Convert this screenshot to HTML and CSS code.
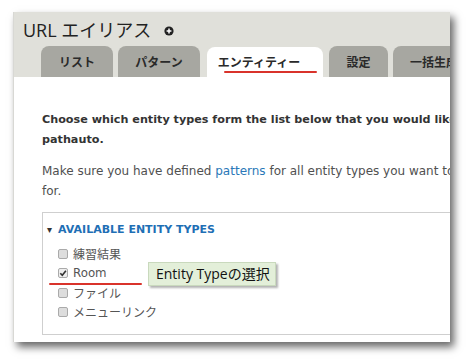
FILE: index.html
```html
<!DOCTYPE html>
<html lang="ja">
<head>
<meta charset="utf-8">
<title>URL エイリアス</title>
<link rel="stylesheet" href="styles.css">
</head>
<body>
<div class="shot">
  <div class="card">
    <header class="head">
      <h1 class="title">URL エイリアス
        <svg class="add" viewBox="0 0 10 10" width="10" height="10"><circle cx="5" cy="5" r="4.6" fill="#222"/><path d="M5 2.6v4.8M2.6 5h4.8" stroke="#fff" stroke-width="1.5"/></svg>
      </h1>
      <nav class="tabs">
        <span class="tab t1">リスト</span>
        <span class="tab t2">パターン</span>
        <span class="tab t3 active">エンティティー</span>
        <span class="tab t4">設定</span>
        <span class="tab t5">一括生成</span>
      </nav>
    </header>
    <main class="content">
      <p class="lead">Choose which entity types form the list below that you would like to use with<br>pathauto.</p>
      <p class="note">Make sure you have defined <a href="#">patterns</a> for all entity types you want to use with<br>for.</p>
      <fieldset class="types">
        <div class="legend"><span class="caret">▾</span>AVAILABLE ENTITY TYPES</div>
        <ul class="checks">
          <li><span class="box"></span>練習結果</li>
          <li><span class="box checked"><svg viewBox="0 0 10 10" width="10" height="10"><path d="M2.3 5.2l2 2.1 3.6-4.6" fill="none" stroke="#333" stroke-width="1.6"/></svg></span>Room</li>
          <li><span class="box"></span>ファイル</li>
          <li><span class="box"></span>メニューリンク</li>
        </ul>
      </fieldset>
    </main>
  </div>
  <span class="redline tab-line"></span>
  <span class="redline room-line"></span>
  <div class="callout">Entity Typeの選択</div>
</div>
</body>
</html>
```
FILE: styles.css
```css
* { box-sizing: border-box; }
html, body { margin: 0; background: #fff; }
.shot {
  position: relative;
  width: 474px;
  height: 363px;
  padding: 12px 0 0 13px;
}
.card {
  width: 437px;
  height: 330px;
  overflow: hidden;
  background: #fff;
  border-left: 1px solid #d8d8d4;
  box-shadow: 4px 5px 8px rgba(0, 0, 0, 0.6);
  display: flex;
  flex-direction: column;
}
.head {
  background: #e0e0da;
  height: 65px;
  display: flex;
  flex-direction: column;
}
.title {
  margin: 0;
  height: 34px;
  padding: 1px 0 0 9px;
  font: normal 18px/28px "Open Sans", "Noto Sans CJK JP", sans-serif;
  color: #222;
  display: flex;
  align-items: center;
  gap: 13px;
  white-space: nowrap;
}
.add { margin-top: 2px; }
.tabs {
  display: flex;
  gap: 5px;
  padding-left: 27px;
  height: 31px;
  align-items: flex-end;
  white-space: nowrap;
}
.tab {
  height: 31px;
  background: #a7a7a1;
  border-radius: 8px 8px 0 0;
  display: flex;
  align-items: center;
  justify-content: center;
  font: bold 12px/1 "Noto Sans CJK JP", sans-serif;
  color: #2a2a2a;
  flex: none;
}
.t1 { width: 72px; }
.t2 { width: 82px; }
.t3 { width: 116px; margin-left: 2px; }
.t4 { width: 59px; margin-left: 1px; }
.t5 { width: 80px; justify-content: flex-start; padding-left: 17px; }
.tab.active { background: #fff; height: 30px; padding-right: 12px; }
.content {
  flex: 1;
  width: 560px;
  padding: 33px 0 0 28px;
  font-family: "DejaVu Sans", "Noto Sans CJK JP", sans-serif;
  font-size: 12px;
  line-height: 20px;
  color: #505050;
}
.content p { margin: 0 0 11px; white-space: nowrap; }
.lead { font-weight: bold; color: #333; font-size: 11.2px; }
.note a { color: #2a78b8; text-decoration: none; }
.types {
  margin: 0;
  padding: 9px 0 0 4px;
  border: 1px solid #cfcfcf;
  border-right: none;
  height: 123px;
}
.legend {
  font-weight: bold;
  font-size: 11px;
  color: #1f6fb5;
  line-height: 16px;
}
.caret { display: inline-block; width: 11px; font-size: 10px; color: #333; }
.checks {
  list-style: none;
  margin: 6px 0 0;
  padding: 0 0 0 11px;
}
.checks li {
  display: flex;
  align-items: center;
  gap: 5px;
  height: 19.5px;
  font-size: 12px;
  font-family: "Noto Sans CJK JP", sans-serif;
  color: #555;
}
.checks li:nth-child(2) { font-family: "DejaVu Sans", sans-serif; font-size: 11.8px; }
.box {
  width: 10px;
  height: 10px;
  border: 1px solid #aaa;
  border-radius: 2px;
  background: #ddd;
  display: flex;
}
.box.checked { background: #eee; }
.box svg { margin: -1px; }
.redline {
  position: absolute;
  height: 2px;
  background: #d9332b;
  border-radius: 1px;
}
.tab-line { left: 224px; top: 71px; width: 93px; }
.room-line { left: 49px; top: 283px; width: 93px; }
.callout {
  position: absolute;
  left: 148px;
  top: 262px;
  width: 128px;
  height: 24px;
  background: #e3efd9;
  border: 1px solid #c9d9bd;
  box-shadow: 2px 2px 2px rgba(0, 0, 0, 0.3);
  font: 14px/22px "Open Sans", "Noto Sans CJK JP", sans-serif;
  color: #111;
  padding-left: 7px;
  white-space: nowrap;
}
```
